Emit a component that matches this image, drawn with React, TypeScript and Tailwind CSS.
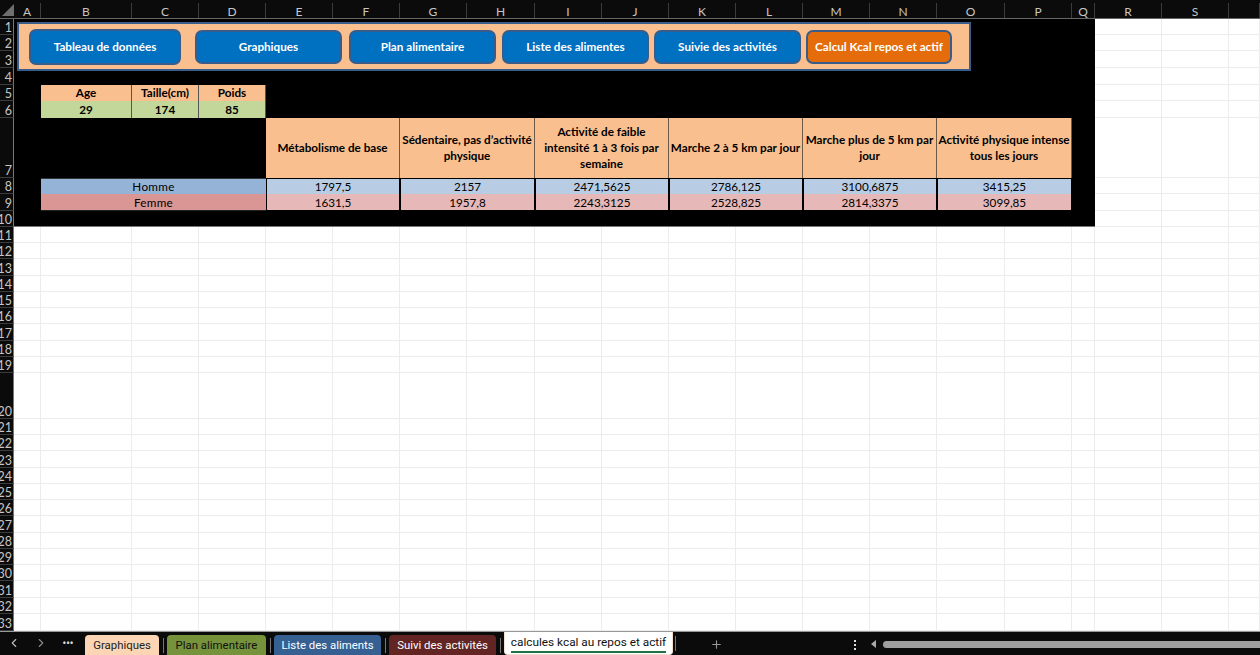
import { Fragment } from "react";
import { ChevronLeft, ChevronRight, Plus } from "lucide-react";

const COLUMNS = ["A", "B", "C", "D", "E", "F", "G", "H", "I", "J", "K", "L", "M", "N", "O", "P", "Q", "R", "S", ""];
const ROW_COUNT = 33;
// A1:Q10 is painted black, no empty cells are needed there
const BLACK_ROWS = 10;
const BLACK_COLS = 17;

const NAV_BUTTONS = [
  { label: "Tableau de données", className: "ml-[10px] w-[152px] h-[36px] bg-[#0070c0]" },
  { label: "Graphiques", className: "ml-[14px] w-[147px] h-[34px] bg-[#0070c0]" },
  { label: "Plan alimentaire", className: "ml-[7px] w-[147px] h-[34px] bg-[#0070c0]" },
  { label: "Liste des alimentes", className: "ml-[6px] w-[147px] h-[34px] bg-[#0070c0]" },
  { label: "Suivie des activités", className: "ml-[5px] w-[147px] h-[34px] bg-[#0070c0]" },
  { label: "Calcul Kcal repos et actif", className: "ml-[5px] w-[146px] h-[34px] bg-[#e46c0a]" },
];

const ACTIVITY_COLUMNS = [
  { title: "Métabolisme de base", homme: "1797,5", femme: "1631,5", col: "col-start-6" },
  { title: "Sédentaire, pas d’activité physique", homme: "2157", femme: "1957,8", col: "col-start-8" },
  { title: "Activité de faible intensité 1 à 3 fois par semaine", homme: "2471,5625", femme: "2243,3125", col: "col-start-10" },
  { title: "Marche 2 à 5 km par jour", homme: "2786,125", femme: "2528,825", col: "col-start-12" },
  { title: "Marche plus de 5 km par jour", homme: "3100,6875", femme: "2814,3375", col: "col-start-14" },
  { title: "Activité physique intense tous les jours", homme: "3415,25", femme: "3099,85", col: "col-start-16" },
];

const PROFILE = [
  { title: "Age", value: "29", col: "col-start-3" },
  { title: "Taille(cm)", value: "174", col: "col-start-4" },
  { title: "Poids", value: "85", col: "col-start-5" },
];

const TABS = [
  { label: "Graphiques", className: "w-[74px] bg-[#fcd5b4] text-[#222]" },
  { label: "Plan alimentaire", className: "w-[99px] bg-[#76933c] text-[#111]" },
  { label: "Liste des aliments", className: "w-[107px] bg-[#366092] text-white" },
  { label: "Suivi des activités", className: "w-[107px] bg-[#632523] text-white" },
];

const App = () => {
  return (
    <div className="w-[1260px] h-[655px] overflow-hidden relative bg-white font-['Lato',sans-serif] text-[11.7px] leading-none text-black">
      {/* Sheet */}
      <div className="grid grid-cols-[14px_27px_91px_67px_67px_67px_67px_67px_68px_67px_67px_67px_67px_67px_67px_68px_67px_23px_67px_67px_31px] grid-rows-[19px_16px_16px_17px_17px_16px_17px_60px_16px_17px_16px_16px_16px_17px_16px_16px_16px_17px_16px_16px_46px_16px_16px_17px_16px_16px_16px_17px_16px_16px_16px_17px_16px_17px]">
        {/* Corner */}
        <div className="bg-[#0b0b0b] border-b border-[#666] relative">
          <div className="absolute right-0 bottom-[2px] border-l-[12px] border-b-[12px] border-l-transparent border-b-[#6e6e6e]" />
        </div>
        {COLUMNS.map((name, i) => (
          <div key={i} className="bg-[#0b0b0b] pt-[3px] border-b border-[#666]">
            <div className="h-full pt-[2px] text-[#c6c6c6] text-[12px] flex items-center justify-center border-r border-[#3c3c3c]">
              {name}
            </div>
          </div>
        ))}

        {/* Row headers and empty cells */}
        {Array.from({ length: ROW_COUNT }, (_, r) => (
          <Fragment key={r}>
            <div
              style={{ gridRow: r + 2, gridColumn: 1 }}
              className="bg-[#0b0b0b] text-[#c6c6c6] text-[12.5px] pr-[1px] flex items-end justify-end border-r border-b border-r-[#777] border-b-[#3c3c3c] overflow-hidden"
            >
              {r + 1}
            </div>
            {COLUMNS.map((_, c) =>
              r >= BLACK_ROWS || c >= BLACK_COLS ? (
                <div key={c} style={{ gridRow: r + 2, gridColumn: c + 2 }} className="border-r border-b border-[#ececec]" />
              ) : null
            )}
          </Fragment>
        ))}

        {/* Black block A1:Q10 */}
        <div className="col-start-2 col-end-19 row-start-2 row-end-12 bg-black border-b border-[#777]" />

        {PROFILE.map((p) => (
          <Fragment key={p.title}>
            <div className={`${p.col} row-start-6 bg-[#fabf8f] font-bold flex items-center justify-center border-r border-[#555]`}>
              {p.title}
            </div>
            <div className={`${p.col} row-start-7 bg-[#c4d79b] font-bold flex items-center justify-center border-r border-[#555]`}>
              {p.value}
            </div>
          </Fragment>
        ))}

        <div className="col-start-3 col-span-3 row-start-9 bg-[#95b3d7] flex items-center justify-center border-t border-[#333] tracking-[0.3px]">
          Homme
        </div>
        <div className="col-start-3 col-span-3 row-start-10 bg-[#da9694] flex items-center justify-center pt-[1px] border-b border-[#222] tracking-[0.3px]">
          Femme
        </div>

        {ACTIVITY_COLUMNS.map((a) => (
          <Fragment key={a.title}>
            <div className={`${a.col} col-span-2 row-start-8 bg-[#fabf8f] font-bold leading-[16px] text-center flex items-center justify-center pb-[3px] border-r border-[#6b5a48]`}>
              {a.title}
            </div>
            <div className={`${a.col} col-span-2 row-start-9 bg-[#b8cce4] flex items-center justify-center border-t border-l border-r border-black`}>
              {a.homme}
            </div>
            <div className={`${a.col} col-span-2 row-start-10 bg-[#e6b8b7] flex items-center justify-center pt-[1px] border-b border-l border-r border-black`}>
              {a.femme}
            </div>
          </Fragment>
        ))}
      </div>

      {/* Navigation shapes floating over the sheet */}
      <nav className="absolute left-[17px] top-[22px] w-[954px] h-[49px] bg-[#fabf8f] border-2 border-[#385d8a] flex items-center">
        {NAV_BUTTONS.map((b) => (
          <div
            key={b.label}
            className={`${b.className} shrink-0 rounded-[7px] border-2 border-[#385d8a] text-white font-bold flex items-center justify-center`}
          >
            {b.label}
          </div>
        ))}
      </nav>

      {/* Sheet tabs */}
      <div className="absolute left-0 right-0 bottom-0 h-[24px] bg-[#0b0b0b] border-t border-[#999] font-['Roboto',sans-serif] text-[11.4px] flex items-end">
        <ChevronLeft size={14} className="ml-[7px] mb-[5px] text-[#bbb]" />
        <ChevronRight size={14} className="ml-[13px] mb-[5px] text-[#888]" />
        <span className="ml-[13px] mb-[6px] w-[14px] text-[#ddd] font-bold text-[10px] leading-[10px] text-center">•••</span>
        <div className="ml-[10px] flex items-end">
          {TABS.map((t) => (
            <Fragment key={t.label}>
              <div className={`${t.className} h-[20px] pt-[1px] rounded-t-[4px] flex items-center justify-center`}>{t.label}</div>
              <span className="ml-[4px] mr-[3px] mb-[2px] w-px h-[15px] bg-[#777]" />
            </Fragment>
          ))}
        </div>
        <div className="w-[169px] h-[23px] self-start bg-white rounded-b-[4px] border-x border-b border-[#f5e0d0] flex flex-col items-center pt-[5px]">
          <span className="text-[#111] text-[11.8px]">calcules kcal au repos et actif</span>
          <span className="mt-[2px] w-[155px] h-[2px] bg-[#217346]" />
        </div>
        <span className="ml-[2px] mb-[4px] w-px h-[15px] bg-[#777]" />
        <Plus size={13} className="ml-[34px] mb-[4px] text-[#999]" />
        <span className="ml-[131px] mb-[5px] w-[4px] flex flex-col gap-[2px]">
          <i className="w-[2px] h-[2px] bg-[#ddd]" />
          <i className="w-[2px] h-[2px] bg-[#ddd]" />
          <i className="w-[2px] h-[2px] bg-[#ddd]" />
        </span>
        <span className="ml-[13px] mb-[7px] border-y-[4px] border-r-[5px] border-y-transparent border-r-[#aaa]" />
        <span className="ml-[7px] mb-[7px] flex-1 h-[7px] rounded-l-full bg-[#9e9e9e]" />
      </div>
    </div>
  );
};

export default App;
